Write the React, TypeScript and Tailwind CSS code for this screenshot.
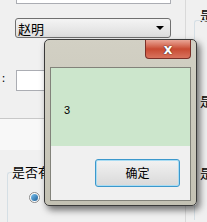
export default function App() {
  const cjk = { fontFamily: '"Noto Sans CJK SC", "Noto Sans", sans-serif' };

  return (
    <div className="relative w-[207px] h-[222px] overflow-hidden bg-[#f0f0f0] text-black" style={cjk}>
      <div className="flex h-full">
        {/* Left form column */}
        <div className="w-[186px] h-full border-r border-[#d9d9d9] flex flex-col">
          <div className="ml-[16px] w-[155px] h-[4px] bg-white border-x border-b border-[#abadb3]" />

          {/* Combo box */}
          <div className="mt-[14px] ml-[15px] w-[156px] h-[20px] rounded-[3px] border border-[#707070] bg-gradient-to-b from-[#f4f4f4] to-[#dddddd] flex items-center justify-between pl-[2px] pr-[6px]">
            <span className="text-[13px] leading-none">赵明</span>
            <span className="w-0 h-0 border-x-[4px] border-x-transparent border-t-[4px] border-t-black" />
          </div>

          {/* Text field row */}
          <div className="mt-[32px] flex items-start">
            <span className="ml-[2px] mt-[2px] text-[11px] leading-[10px]">:</span>
            <div className="ml-[11px] w-[150px] h-[21px] bg-white border border-[#abadb3]" />
          </div>

          <div className="mt-[27px] h-[32px] bg-[#f8f8f8] border-t border-[#c8c8c8]" />

          {/* Group box */}
          <div className="relative mt-[22px] ml-[7px] flex-1 border-l border-t border-[#d5dfe5] rounded-tl-[3px]">
            <span className="absolute left-[4px] -top-[9px] bg-[#f0f0f0] text-[13px] leading-[15px]">是否有</span>
            <div className="mt-[19px] ml-[21px] w-[11px] h-[11px] rounded-full border border-[#8a8a8a] bg-white flex items-center justify-center">
              <div className="w-[7px] h-[7px] rounded-full bg-gradient-to-br from-[#7cc4f0] to-[#1a5e96]" />
            </div>
          </div>
        </div>

        {/* Right column */}
        <div className="flex-1 relative">
          <span className="absolute left-[14px] top-[7px] text-[13px] leading-[15px]">是</span>
          <div className="absolute left-[8px] top-[20px] w-[20px] h-[200px] border-l border-t border-[#d5dfe5] rounded-tl-[3px]" />
          <span className="absolute left-[14px] top-[93px] text-[13px] leading-[15px]">是</span>
          <span className="absolute left-[14px] top-[165px] text-[13px] leading-[15px]">是</span>
        </div>
      </div>

      {/* Message box */}
      <div className="absolute left-[44px] top-[39px] w-[153px] h-[167px] rounded-[5px] border border-[#3a3a3a] bg-gradient-to-b from-[#d2d0c4] to-[#c3c1b3] shadow-[3px_4px_7px_rgba(0,0,0,0.55)] flex flex-col">
        <div className="relative h-[27px]">
          <div className="absolute right-[5px] top-0 w-[46px] h-[19px] rounded-b-[4px] border border-t-0 border-[#7a3028] bg-gradient-to-b from-[#e9a596] via-[#c84a32] to-[#d8735e] flex items-center justify-center">
            <span
              className="text-white text-[14px] font-bold leading-none"
              style={{ fontFamily: '"DejaVu Sans", sans-serif', textShadow: '0 0 1px #3a1a14, 0 0 1px #3a1a14' }}
            >
              x
            </span>
          </div>
        </div>
        <div className="mx-[5px] h-[134px] border border-[#82827a] flex flex-col">
          <div className="h-[78px] bg-[#cce6cc] pl-[13px] pt-[27px]">
            <span className="text-[11px] leading-[14px]" style={{ fontFamily: '"Liberation Sans", sans-serif' }}>3</span>
          </div>
          <div className="flex-1 bg-[#f0f0f0] flex justify-end items-start pt-[13px] pr-[10px]">
            <div className="w-[85px] h-[28px] rounded-[3px] border border-[#3c98cc] shadow-[inset_0_0_0_1px_#a9dcf3] bg-gradient-to-b from-[#f2f2f2] to-[#d9d9d9] flex items-center justify-center">
              <span className="text-[12px] leading-none">确定</span>
            </div>
          </div>
        </div>
      </div>
    </div>
  );
}
